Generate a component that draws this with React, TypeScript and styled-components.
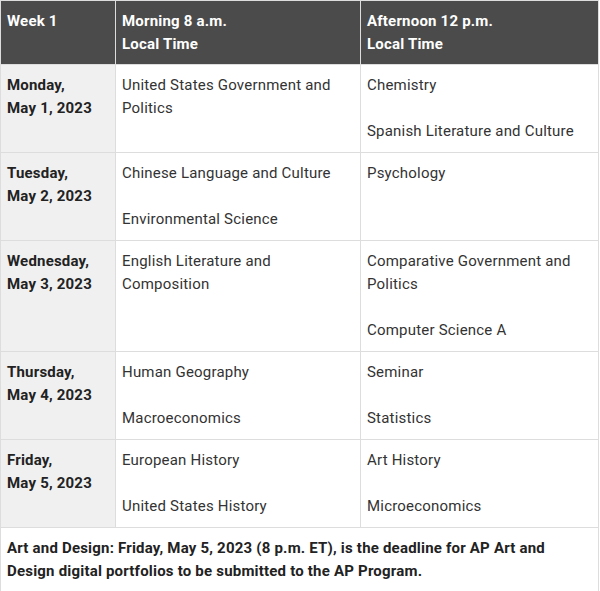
import React from 'react';
import styled, { createGlobalStyle } from 'styled-components';

const GlobalStyle = createGlobalStyle`
    html, body {
        margin: 0;
        padding: 0;
        background: #ffffff;
    }
`;

const Table = styled.table`
    width: 599px;
    border-collapse: collapse;
    font-family: Roboto, "Liberation Sans", sans-serif;
    font-size: 15px;
    letter-spacing: 0.2px;
    line-height: 23px;
    color: #333333;
    table-layout: fixed;
`;

const HeadCell = styled.th<{ $width?: number }>`
    width: ${(p) => (p.$width ? `${p.$width}px` : 'auto')};
    background-color: #4b4b4b;
    color: #ffffff;
    font-weight: 700;
    text-align: left;
    vertical-align: top;
    padding: 9px 6px 8px;
    border: 1px solid #dddddd;
`;

const DayCell = styled.td`
    background-color: #f0f0f0;
    color: #222222;
    font-weight: 700;
    vertical-align: top;
    padding: 9px 6px 9px;
    border: 1px solid #dddddd;
`;

const Cell = styled.td`
    vertical-align: top;
    padding: 9px 6px 9px;
    border: 1px solid #dddddd;
`;

const NoteCell = styled.td`
    color: #222222;
    font-weight: 700;
    vertical-align: top;
    padding: 9px 6px 30px;
    border: 1px solid #dddddd;
`;

const Exam = styled.p`
    margin: 0 0 23px;

    &:last-child {
        margin-bottom: 0;
    }
`;

interface Day {
    day: string;
    date: string;
    morning: string[];
    afternoon: string[];
}

const days: Day[] = [
    {
        day: 'Monday,',
        date: 'May 1, 2023',
        morning: ['United States Government and Politics'],
        afternoon: ['Chemistry', 'Spanish Literature and Culture'],
    },
    {
        day: 'Tuesday,',
        date: 'May 2, 2023',
        morning: ['Chinese Language and Culture', 'Environmental Science'],
        afternoon: ['Psychology'],
    },
    {
        day: 'Wednesday,',
        date: 'May 3, 2023',
        morning: ['English Literature and Composition'],
        afternoon: ['Comparative Government and Politics', 'Computer Science A'],
    },
    {
        day: 'Thursday,',
        date: 'May 4, 2023',
        morning: ['Human Geography', 'Macroeconomics'],
        afternoon: ['Seminar', 'Statistics'],
    },
    {
        day: 'Friday,',
        date: 'May 5, 2023',
        morning: ['European History', 'United States History'],
        afternoon: ['Art History', 'Microeconomics'],
    },
];

const App: React.FC = () => {
    return (
        <>
            <GlobalStyle />
            <Table>
                <thead>
                    <tr>
                        <HeadCell $width={102}>Week 1</HeadCell>
                        <HeadCell $width={232}>
                            Morning 8 a.m.
                            <br />
                            Local Time
                        </HeadCell>
                        <HeadCell>
                            Afternoon 12 p.m.
                            <br />
                            Local Time
                        </HeadCell>
                    </tr>
                </thead>
                <tbody>
                    {days.map((d) => (
                        <tr key={d.date}>
                            <DayCell>
                                {d.day}
                                <br />
                                {d.date}
                            </DayCell>
                            <Cell>
                                {d.morning.map((m) => (
                                    <Exam key={m}>{m}</Exam>
                                ))}
                            </Cell>
                            <Cell>
                                {d.afternoon.map((a) => (
                                    <Exam key={a}>{a}</Exam>
                                ))}
                            </Cell>
                        </tr>
                    ))}
                    <tr>
                        <NoteCell colSpan={3}>
                            Art and Design: Friday, May 5, 2023 (8 p.m. ET), is the deadline for AP Art and
                            Design digital portfolios to be submitted to the AP Program.
                        </NoteCell>
                    </tr>
                </tbody>
            </Table>
        </>
    );
};

export default App;
